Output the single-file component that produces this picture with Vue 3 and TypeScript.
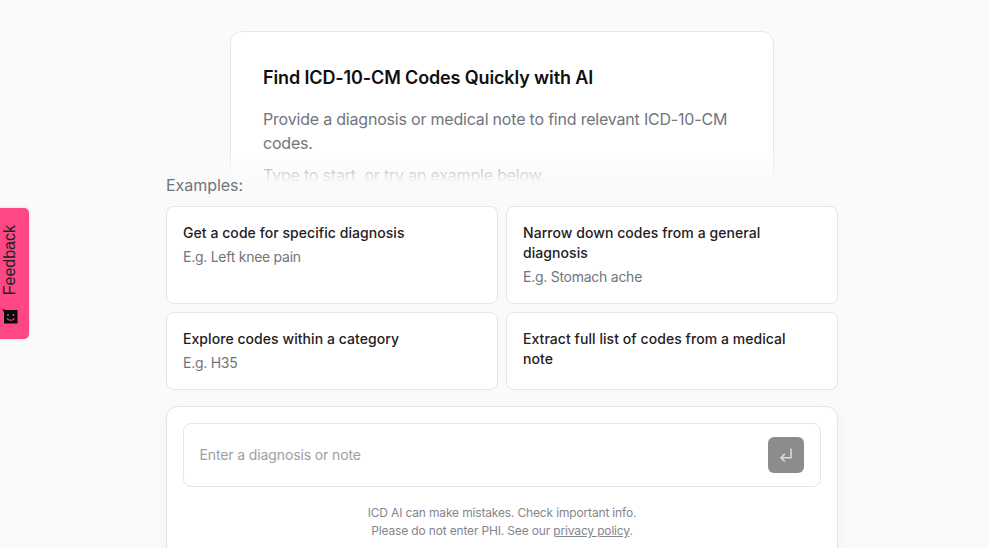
<script setup lang="ts">
const examples = [
  { title: 'Get a code for specific diagnosis', hint: 'E.g. Left knee pain' },
  { title: 'Narrow down codes from a general diagnosis', hint: 'E.g. Stomach ache' },
  { title: 'Explore codes within a category', hint: 'E.g. H35' },
  { title: 'Extract full list of codes from a medical note' },
];
</script>

<template>
  <div class="page">
    <section class="intro-wrap">
      <div class="intro">
        <h1>Find ICD-10-CM Codes Quickly with AI</h1>
        <p>Provide a diagnosis or medical note to find relevant ICD-10-CM codes.</p>
        <p>Type to start, or try an example below.</p>
      </div>
    </section>

    <section class="dock">
      <div class="fade"></div>
      <div class="label">Examples:</div>
      <div class="examples">
        <button v-for="item in examples" :key="item.title" class="example">
          <span class="example-title">{{ item.title }}</span>
          <span v-if="item.hint" class="example-hint">{{ item.hint }}</span>
        </button>
      </div>
      <div class="composer">
        <div class="input-box">
          <span class="placeholder">Enter a diagnosis or note</span>
          <button class="send" aria-label="Send">
            <svg width="14" height="16" viewBox="0 0 14 16" fill="none" stroke="#dcdcdc" stroke-width="1.5">
              <path d="M12 1.5v9.2H2" />
              <path d="M5.8 6.9 2 10.7l3.8 3.8" />
            </svg>
          </button>
        </div>
        <div class="disclaimer">
          ICD AI can make mistakes. Check important info.<br />
          Please do not enter PHI. See our <a href="#">privacy policy</a>.
        </div>
      </div>
    </section>

    <button class="feedback">
      <span>Feedback</span>
      <svg width="16" height="15" viewBox="0 0 16 15">
        <path d="M0 0 4 1H15.5V14.5H2V3Z" fill="#0b0b0b" />
        <circle cx="6" cy="6" r="0.9" fill="#ff4785" />
        <circle cx="11.5" cy="6" r="0.9" fill="#ff4785" />
        <path d="M5 9.2a4 3 0 0 0 7.6 0" fill="none" stroke="#ff4785" stroke-width="1.1" />
      </svg>
    </button>
  </div>
</template>

<style>
body {
  background: #fafafa;
}
</style>

<style scoped>
.page {
  position: relative;
  display: flex;
  flex-direction: column;
  box-sizing: border-box;
  height: 548px;
  padding-left: 15px;
  overflow: hidden;
  font-family: Inter, "Liberation Sans", sans-serif;
  background: #fafafa;
}

.intro-wrap {
  display: flex;
  flex: none;
  justify-content: center;
  box-sizing: border-box;
  height: 206px;
  padding-top: 31px;
  overflow: hidden;
}

.intro {
  box-sizing: border-box;
  flex: none;
  width: 544px;
  height: 200px;
  padding: 32px;
  background: #fff;
  border: 1px solid #e8e8e8;
  border-radius: 12px;
}

h1 {
  margin: 0 0 15px;
  font-size: 18px;
  font-weight: 600;
  line-height: 28px;
  letter-spacing: -0.13px;
  color: #0f0f10;
}

.intro p {
  margin: 0 0 8px;
  font-size: 16px;
  line-height: 24px;
  letter-spacing: -0.2px;
  color: #71757c;
}

.dock {
  position: relative;
  flex: none;
  width: 672px;
  margin: -36px auto 0;
}

.fade {
  position: absolute;
  top: -20px;
  left: -60px;
  right: -60px;
  height: 56px;
  background: linear-gradient(to bottom, rgb(250 250 250 / 0%), #fafafa 58%);
}

.label {
  position: relative;
  height: 36px;
  font-size: 16px;
  line-height: 30px;
  letter-spacing: -0.05px;
  color: #71757c;
}

.examples {
  position: relative;
  display: grid;
  grid-template-columns: 1fr 1fr;
  grid-template-rows: 98px 78px;
  gap: 8px;
}

.example {
  display: flex;
  flex-direction: column;
  align-items: flex-start;
  padding: 16px 24px 16px 16px;
  font-family: inherit;
  text-align: left;
  background: #fff;
  border: 1px solid #e5e5e5;
  border-radius: 8px;
}

.example-title {
  font-size: 14px;
  font-weight: 500;
  line-height: 20px;
  letter-spacing: 0.06px;
  color: #1f2024;
}

.example-hint {
  margin-top: 4px;
  font-size: 14px;
  line-height: 20px;
  letter-spacing: -0.26px;
  color: #71757c;
}

.composer {
  position: relative;
  box-sizing: border-box;
  height: 180px;
  margin-top: 16px;
  padding: 16px;
  background: #fff;
  border: 1px solid #e5e5e5;
  border-radius: 12px;
  box-shadow: 0 4px 14px rgb(0 0 0 / 4%);
}

.input-box {
  display: flex;
  align-items: center;
  justify-content: space-between;
  box-sizing: border-box;
  height: 64px;
  padding: 0 16px 0 15.5px;
  background: #fff;
  border: 1px solid #e5e5e5;
  border-radius: 8px;
}

.placeholder {
  margin-top: -1px;
  font-size: 14px;
  letter-spacing: -0.12px;
  color: #9b9ea4;
}

.send {
  display: flex;
  align-items: center;
  justify-content: center;
  width: 36px;
  height: 36px;
  padding: 0;
  background: #8c8c8c;
  border: none;
  border-radius: 6px;
}

.disclaimer {
  margin-top: 17px;
  font-size: 12px;
  line-height: 18px;
  letter-spacing: -0.16px;
  color: #83868c;
  text-align: center;
}

.disclaimer a {
  color: inherit;
}

.feedback {
  position: absolute;
  top: 208px;
  left: 0;
  display: flex;
  flex-direction: column;
  gap: 13px;
  align-items: center;
  justify-content: center;
  box-sizing: border-box;
  width: 29px;
  height: 131px;
  padding: 2px 9px 0 0;
  background: #ff4785;
  border: none;
  border-radius: 0 5px 5px 0;
  box-shadow: 0 0 3px rgb(0 0 0 / 15%);
}

.feedback span {
  font-family: "Liberation Sans", Arial, sans-serif;
  font-size: 16px;
  color: #222;
  writing-mode: vertical-rl;
  transform: rotate(180deg);
}
</style>
